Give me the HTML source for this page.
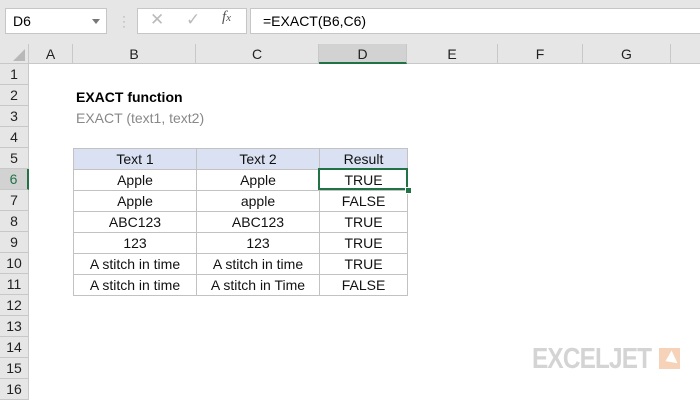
<!DOCTYPE html><html><head><style>
body{margin:0;width:700px;height:400px;overflow:hidden;background:#fff;font-family:"Liberation Sans",sans-serif;position:relative}
.a{position:absolute}
.top{left:0;top:0;width:700px;height:44px;background:#e6e6e6}
.box{background:#fff;border:1px solid #c6c6c6;box-sizing:border-box}
.ch{top:44px;height:20px;background:#e6e6e6;border-right:1px solid #c8c8c8;border-bottom:1px solid #c8c8c8;box-sizing:border-box;text-align:center;font-size:14px;line-height:20px;color:#222}
.rh{left:0;width:29px;height:21px;background:#e6e6e6;border-bottom:1px solid #c8c8c8;border-right:1px solid #c8c8c8;box-sizing:border-box;text-align:center;font-size:14px;line-height:21px;color:#222}
td{border:1px solid #c2c2c2;height:20px;padding:0;text-align:center;font-size:14px;color:#111;line-height:19px}
table{border-collapse:collapse;position:absolute;left:73px;top:148px}
</style></head><body>
<div class="a top"></div>
<div class="a box" style="left:5px;top:8px;width:102px;height:26px;font-size:14px;line-height:24px;padding-left:7px">D6</div>
<div class="a" style="left:92px;top:19px;width:0;height:0;border-left:4px solid transparent;border-right:4px solid transparent;border-top:5px solid #777"></div>
<div class="a" style="left:122px;top:14px;color:#aaa;font-size:12px;line-height:5px">·<br>·<br>·</div>
<div class="a box" style="left:137px;top:8px;width:110px;height:26px"></div>
<div class="a" style="left:150px;top:10px;color:#bbb;font-size:17px">✕</div>
<div class="a" style="left:186px;top:10px;color:#bbb;font-size:17px">✓</div>
<div class="a" style="left:222px;top:9px;color:#555;font-size:15px;font-style:italic;font-family:'Liberation Serif',serif">f<span style="font-size:11px">x</span></div>
<div class="a box" style="left:250px;top:8px;width:460px;height:26px;font-size:14px;line-height:24px;padding-left:12px">=EXACT(B6,C6)</div>
<div class="a ch" style="left:0;width:29px"></div>
<div class="a" style="left:13px;top:49px;width:0;height:0;border-left:12px solid transparent;border-bottom:12px solid #b8b8b8"></div>
<div class="a ch" style="left:29px;width:44px">A</div>
<div class="a ch" style="left:73px;width:123px">B</div>
<div class="a ch" style="left:196px;width:123px">C</div>
<div class="a ch" style="left:319px;width:88px;background:#d2d2d2;border-bottom:2px solid #217346">D</div>
<div class="a ch" style="left:407px;width:91px">E</div>
<div class="a ch" style="left:498px;width:85px">F</div>
<div class="a ch" style="left:583px;width:88px">G</div>
<div class="a ch" style="left:671px;width:29px;border-right:0"></div>
<div class="a rh" style="top:64px">1</div><div class="a rh" style="top:85px">2</div><div class="a rh" style="top:106px">3</div><div class="a rh" style="top:127px">4</div><div class="a rh" style="top:148px">5</div><div class="a rh" style="top:169px;background:#d2d2d2;color:#217346;border-right:2px solid #217346">6</div><div class="a rh" style="top:190px">7</div><div class="a rh" style="top:211px">8</div><div class="a rh" style="top:232px">9</div><div class="a rh" style="top:253px">10</div><div class="a rh" style="top:274px">11</div><div class="a rh" style="top:295px">12</div><div class="a rh" style="top:316px">13</div><div class="a rh" style="top:337px">14</div><div class="a rh" style="top:358px">15</div><div class="a rh" style="top:379px">16</div>
<div class="a" style="left:76px;top:89px;font-size:14px;font-weight:bold">EXACT function</div>
<div class="a" style="left:76px;top:110px;font-size:14px;color:#888">EXACT (text1, text2)</div>
<table>
<tr style="background:#d9e1f2"><td style="width:122px">Text 1</td><td style="width:122px">Text 2</td><td style="width:87px">Result</td></tr>
<tr><td>Apple</td><td>Apple</td><td>TRUE</td></tr>
<tr><td>Apple</td><td>apple</td><td>FALSE</td></tr>
<tr><td>ABC123</td><td>ABC123</td><td>TRUE</td></tr>
<tr><td>123</td><td>123</td><td>TRUE</td></tr>
<tr><td>A stitch in time</td><td>A stitch in time</td><td>TRUE</td></tr>
<tr><td>A stitch in time</td><td>A stitch in Time</td><td>FALSE</td></tr>
</table>
<div class="a" style="left:318px;top:168px;width:90px;height:22px;border:2px solid #217346;box-sizing:border-box"></div>
<div class="a" style="left:405px;top:187px;width:5px;height:5px;background:#217346;border:1px solid #fff"></div>
<div class="a" style="left:532px;top:343px;font-size:29px;font-weight:bold;color:#d4d4d4;letter-spacing:-1px;transform:scaleX(0.84);transform-origin:left;white-space:nowrap">EXCELJET</div>
<div class="a" style="left:659px;top:348px;width:21px;height:21px;background:#f6d2b8"></div>
<div class="a" style="left:665px;top:352px;width:0;height:0;border-top:7px solid transparent;border-bottom:7px solid transparent;border-right:10px solid #fff;transform:rotate(-25deg)"></div>
</body></html>
